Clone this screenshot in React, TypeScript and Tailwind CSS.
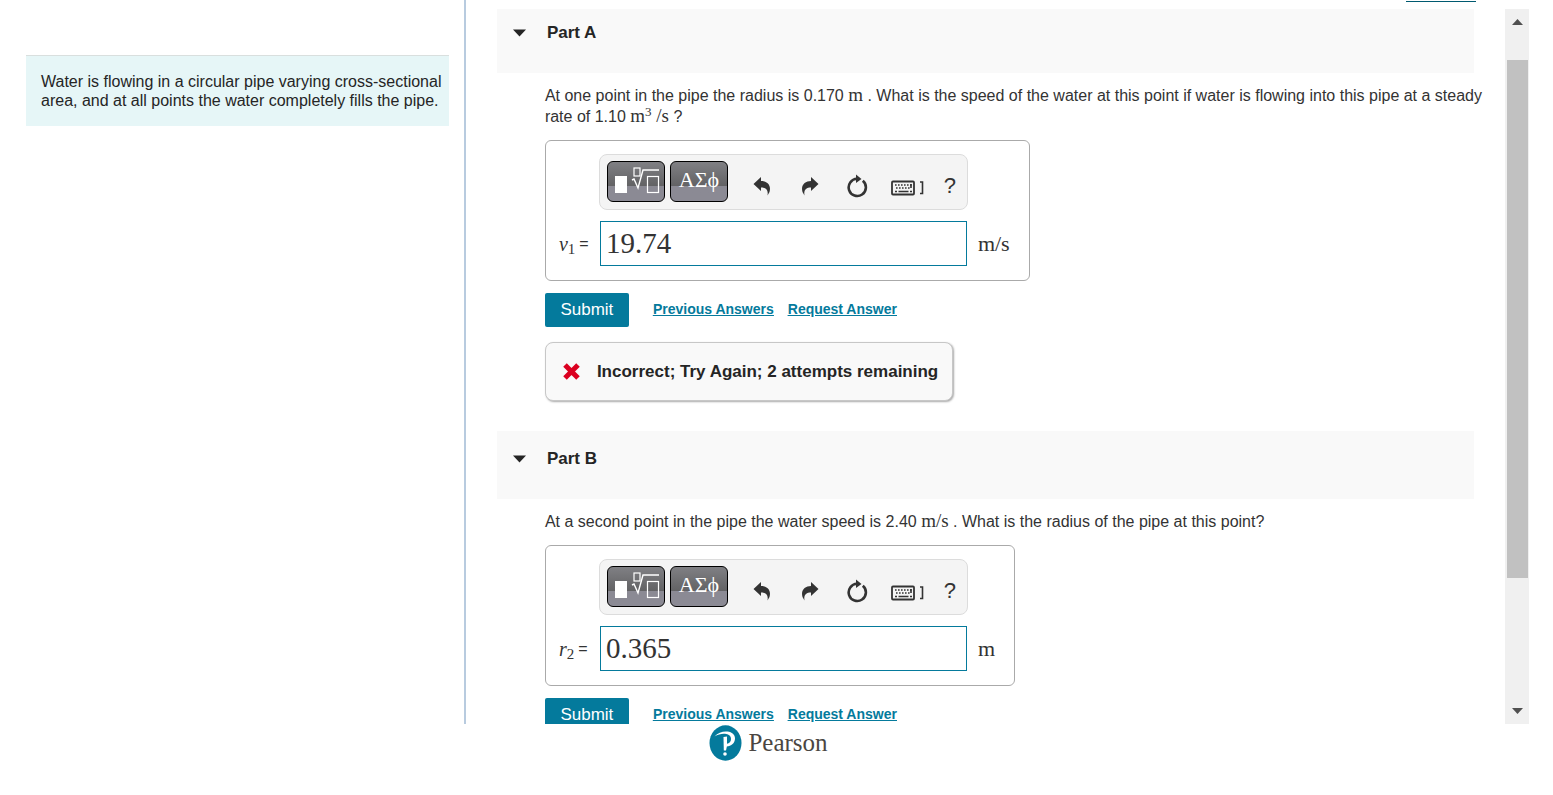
import { useState } from "react";
import type { ReactNode } from "react";

const Unit = ({ children }: { children: ReactNode }) => (
  <span className="font-['Liberation_Serif',serif] text-[19px] leading-none">
    {children}
  </span>
);

function TemplateIcon() {
  return (
    <svg width="46" height="27" viewBox="0 0 46 27" fill="none" stroke="#fff">
      <rect x="1" y="9" width="12" height="17" fill="#fff" stroke="none" />
      <rect x="20" y="1" width="6" height="8" strokeWidth="1.2" />
      <path d="M18 13l2-1 4 9L29 3h16" strokeWidth="1.4" />
      <rect x="33.5" y="9.5" width="11" height="16" strokeWidth="1.2" />
    </svg>
  );
}

function UndoIcon() {
  return (
    <svg width="18" height="20" viewBox="0 0 18 20" fill="#333">
      <path d="M0.500 8L8 1V5C14 5 18.500 9 16.500 16L14.500 19.500C15.500 14 13 11.500 8 11.500V15Z" />
    </svg>
  );
}

function RedoIcon() {
  return (
    <svg width="18" height="20" viewBox="0 0 18 20" fill="#333">
      <path d="M17.500 8L10 1V5C4 5 -0.500 9 1.500 16L3.500 19.500C2.500 14 5 11.500 10 11.500V15Z" />
    </svg>
  );
}

function ResetIcon() {
  return (
    <svg width="22" height="24" viewBox="0 0 22 24" fill="none">
      <path d="M16.800 6.800A8.600 8.600 0 1 1 11 4.800" stroke="#333" strokeWidth="2.600" />
      <path d="M10 0.500L15.500 5L10 9Z" fill="#333" />
    </svg>
  );
}

function KeyboardIcon() {
  return (
    <svg width="34" height="16" viewBox="0 0 34 16" fill="none" stroke="#333">
      <rect x="1" y="1.500" width="22" height="13" rx="1" strokeWidth="1.800" />
      <path d="M4 5h17M5 8h15" strokeWidth="1.600" strokeDasharray="1.600 1.400" />
      <path d="M20 4v4" strokeWidth="1.600" />
      <path d="M4 11.500h2M7.500 11.500h10M19 11.500h2" strokeWidth="1.500" />
      <path d="M29 2h2.500v11.500H29" strokeWidth="1.600" />
    </svg>
  );
}

function Toolbar() {
  const dark =
    "flex h-[41px] w-[58px] justify-center rounded-md border border-black bg-linear-to-b from-[#808084] from-0% via-[#626264] via-62% to-[#8b8a94] to-62% text-white";
  return (
    <div className="flex h-14 rounded-lg border border-[#dcdcdc] bg-[#f4f4f4] pl-[7px] pr-[3px] pt-[6px] text-[#333]">
      <button aria-label="Templates" className={`${dark} mr-[5px] items-center pb-[2px] pl-[3px]`}>
        <TemplateIcon />
      </button>
      <button
        aria-label="Symbols"
        className={`${dark} pt-[6px] font-['Liberation_Serif',serif] text-[22px] leading-6`}
      >
        ΑΣϕ
      </button>
      <div className="flex flex-1 items-center pl-[10px] pt-[2px]">
        <button aria-label="Undo" className="flex w-12 justify-center">
          <UndoIcon />
        </button>
        <button aria-label="Redo" className="flex w-12 justify-center">
          <RedoIcon />
        </button>
        <button aria-label="Reset" className="flex w-[46px] justify-center">
          <ResetIcon />
        </button>
        <button aria-label="Keyboard shortcuts" className="flex w-14 justify-center pt-1">
          <KeyboardIcon />
        </button>
        <button aria-label="Help" className="flex flex-1 justify-center text-[22px] leading-6">
          ?
        </button>
      </div>
    </div>
  );
}

type PartProps = {
  id: string;
  title: string;
  question: ReactNode;
  symbol: string;
  index: string;
  initial: string;
  unit: string;
  children?: ReactNode;
};

function Part({ id, title, question, symbol, index, initial, unit, children }: PartProps) {
  const [answer, setAnswer] = useState(initial);

  return (
    <section className="pb-[30px]">
      <h2 className="flex h-[68px] bg-[#f9f9f9] pl-4 pt-4 text-[17px] font-bold leading-6 text-[#252525]">
        <button className="flex h-6 items-center gap-[21px]">
          <svg width="13" height="8" viewBox="0 0 13 8" fill="#252525">
            <path d="M0 0.500h13L6.500 7.500z" />
          </svg>
          {title}
        </button>
      </h2>
      <div className="pl-12 pt-3">
        <p className="whitespace-nowrap text-[16px] leading-[21px] text-[#333]">{question}</p>
        <div className="mt-[13px] grid w-fit grid-cols-[53px_369px_auto] gap-y-[11px] rounded-md border border-[#aaa] pb-[14px] pr-[19px] pt-[13px] text-[#333]">
          <div className="col-start-2">
            <Toolbar />
          </div>
          <label
            htmlFor={id}
            className="col-start-1 flex items-center pl-[13px] font-['Liberation_Serif',serif] text-[20px] leading-none"
          >
            <i>{symbol}</i>
            <sub className="mr-1 pt-1 text-[15px]">{index}</sub>
            <span className="font-['Liberation_Sans',sans-serif] text-[16px]">=</span>
          </label>
          <input
            id={id}
            value={answer}
            onChange={(e) => setAnswer(e.target.value)}
            className="mx-px h-[45px] border border-[#047a9c] px-[5px] font-['Liberation_Serif',serif] text-[29px] leading-8 text-[#333] outline-none"
          />
          <span className="flex items-center pl-[10px] font-['Liberation_Serif',serif] text-[22px]">
            {unit}
          </span>
        </div>
        <div className="mt-3 flex items-center">
          <button className="mr-6 h-[34px] w-[84px] rounded-xs bg-[#047a9c] text-[17px] text-white">
            Submit
          </button>
          <div className="flex gap-[14px] pb-[2px] text-[14px] font-bold text-[#047a9c] underline">
            <a href="#previous">Previous Answers</a>
            <a href="#request">Request Answer</a>
          </div>
        </div>
        {children}
      </div>
    </section>
  );
}

function Feedback() {
  return (
    <div className="mt-[15px] flex h-[59px] w-fit items-center gap-[17px] rounded-lg border border-[#c7c7c7] bg-[#f9f9f9] pl-[17px] pr-[14px] text-[17px] font-bold text-[#252525] shadow-[1px_1px_2px_#aaa]">
      <svg width="17" height="17" viewBox="0 0 17 17" stroke="#db0020" strokeWidth="5">
        <path d="M2 2l13 13M15 2L2 15" />
      </svg>
      Incorrect; Try Again; 2 attempts remaining
    </div>
  );
}

function ScrollTrack() {
  return (
    <div className="mt-[9px] flex w-6 shrink-0 flex-col items-center bg-[#f0f0f0] py-[9px]">
      <svg width="11" height="7" viewBox="0 0 11 7" fill="#505050">
        <path d="M0 7L5.500 1L11 7z" />
      </svg>
      <div className="mb-[130px] mt-[35px] w-[21px] flex-1 bg-[#c1c1c1]" />
      <svg width="11" height="7" viewBox="0 0 11 7" fill="#505050">
        <path d="M0 0L5.500 6L11 0z" />
      </svg>
    </div>
  );
}

export default function App() {
  return (
    <div className="flex h-screen flex-col overflow-hidden bg-white font-['Liberation_Sans',Arial,sans-serif]">
      <div className="flex min-h-0 flex-1">
        {/* Problem intro */}
        <aside className="w-[30%] shrink-0 border-r-2 border-[#b8cbdf] pl-[26px] pr-[15px] pt-[55px]">
          <p className="border-t border-[#d9dfde] bg-[#e6f6f7] py-4 pl-[15px] pr-1 text-[16px] leading-[19px] text-[#252525]">
            Water is flowing in a circular pipe varying cross-sectional area, and at all points the
            water completely fills the pipe.
          </p>
        </aside>

        {/* Parts */}
        <main className="flex min-w-0 flex-1 flex-col px-[31px]">
          <div className="h-[9px] shrink-0 pt-px">
            <div className="-mr-[2px] ml-auto h-px w-[70px] bg-[#005a70]" />
          </div>
          <div className="-mr-[31px] min-h-0 flex-1 overflow-hidden pr-[31px]">
            <div className="-mt-1">
              <Part
                id="v1"
                title="Part A"
                symbol="v"
                index="1"
                initial="19.74"
                unit="m/s"
                question={
                  <>
                    At one point in the pipe the radius is 0.170 <Unit>m</Unit> . What is the speed
                    of the water at this point if water is flowing into this pipe at a steady
                    <br />
                    rate of 1.10{" "}
                    <Unit>
                      m<sup className="text-[13px]">3</sup> /s
                    </Unit>{" "}
                    ?
                  </>
                }
              >
                <Feedback />
              </Part>
              <Part
                id="r2"
                title="Part B"
                symbol="r"
                index="2"
                initial="0.365"
                unit="m"
                question={
                  <>
                    At a second point in the pipe the water speed is 2.40 <Unit>m/s</Unit> . What is
                    the radius of the pipe at this point?
                  </>
                }
              />
            </div>
          </div>
        </main>
        <div className="mr-6 flex">
          <ScrollTrack />
        </div>
      </div>

      <footer className="flex h-[71px] shrink-0 justify-center pr-4 pt-px">
        <div className="flex h-9 items-center gap-[6px]">
          <svg width="33" height="36" viewBox="0 0 33 36" fill="none">
            <ellipse cx="16.500" cy="18" rx="16" ry="17.700" fill="#047a9c" />
            <path
              d="M5.500 11.500C9 7.500 14 6 18.500 6.500C23 7 26 9.500 26 13.500C26 18 22.500 21 17.500 21.500V19C20.500 18.300 22 16.500 22 14C22 10.800 19.500 9 16 8.800C12.500 8.500 9 9.500 5.500 11.500Z"
              fill="#fff"
            />
            <path d="M14.500 12L18 11.500V21L17 25.500H14.800Z" fill="#fff" />
            <circle cx="16" cy="29" r="1.800" fill="#fff" />
          </svg>
          <span className="font-['Liberation_Serif',serif] text-[25px] leading-9 text-[#4a4642]">
            Pearson
          </span>
        </div>
      </footer>
    </div>
  );
}
